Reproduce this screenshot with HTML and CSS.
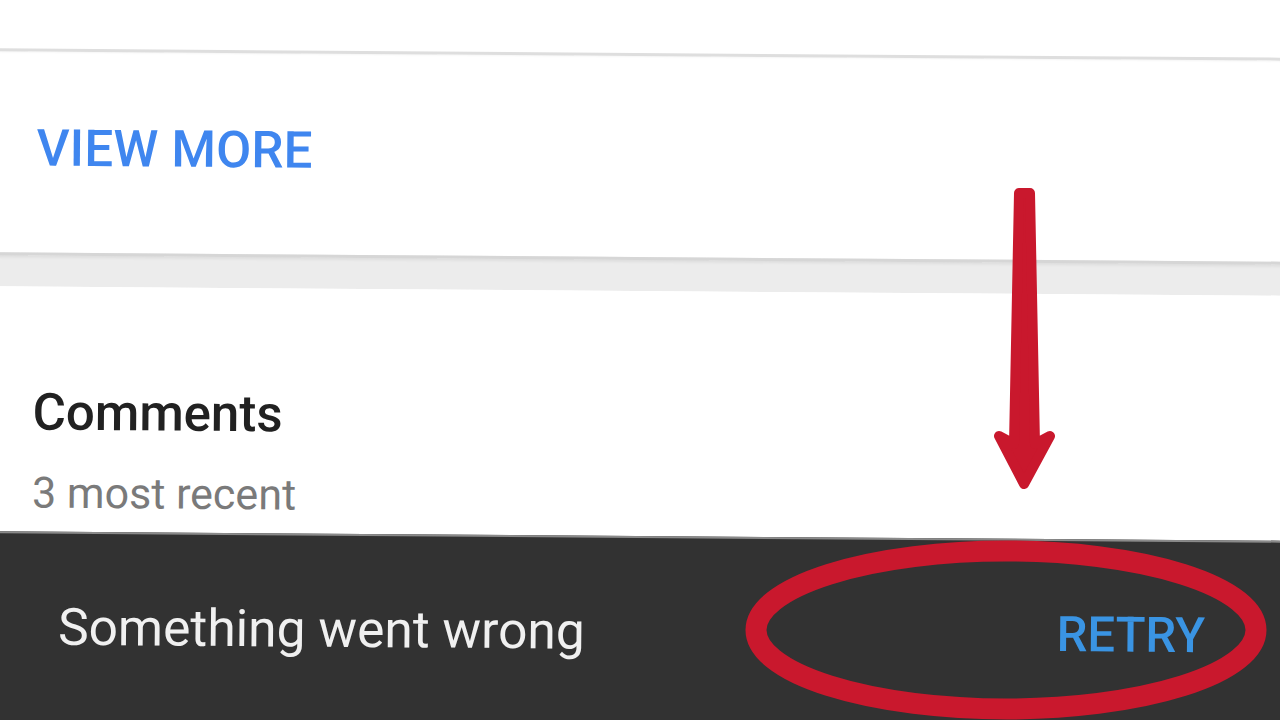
FILE: index.html
```html
<!DOCTYPE html>
<html lang="en">
<head>
<meta charset="utf-8">
<title>Comments - Something went wrong</title>
<link rel="stylesheet" href="styles.css">
</head>
<body>
<div class="page">
  <div class="top-space"></div>
  <section class="card card-more">
    <a class="view-more">VIEW MORE</a>
  </section>
  <div class="band"></div>
  <section class="card card-comments">
    <h2 class="comments-title">Comments</h2>
    <p class="comments-sub">3 most recent</p>
  </section>
  <div class="snackbar">
    <span class="snack-text">Something went wrong</span>
    <span class="snack-action">RETRY</span>
  </div>
</div>
<svg class="annotation" width="1280" height="720" viewBox="0 0 1280 720" aria-hidden="true">
  <ellipse cx="1006" cy="630" rx="250" ry="79" fill="none" stroke="#c9182d" stroke-width="21"/>
  <polygon points="1019,193 1030,193 1035,444 1050,436 1024,484 999,436 1014,444" fill="#c9182d" stroke="#c9182d" stroke-width="10" stroke-linejoin="round"/>
</svg>
</body>
</html>
```

FILE: styles.css
```css
html, body {
  margin: 0;
  padding: 0;
  width: 1280px;
  height: 720px;
  overflow: hidden;
  background: #ffffff;
  font-family: Roboto, "Liberation Sans", Arial, sans-serif;
}

.page {
  width: 1360px;
  height: 760px;
  margin-left: -40px;
  transform: rotate(0.42deg);
  transform-origin: 680px 360px;
  display: flex;
  flex-direction: column;
  background: #ffffff;
}

.top-space {
  height: 53px;
  flex: none;
  background: #ffffff;
}

.card {
  background: #ffffff;
  flex: none;
}

.card-more {
  height: 204px;
  border-top: 3px solid #dedede;
  box-sizing: border-box;
  box-shadow: inset 0 1px 2px rgba(0,0,0,0.04);
  padding: 67px 0 0 75px;
}

.view-more {
  display: block;
  font-size: 51px;
  line-height: 60px;
  font-weight: 500;
  color: #3f86ef;
  letter-spacing: 0.2px;
}

.band {
  height: 34px;
  flex: none;
  background: #ececec;
  border-top: 3px solid #d6d6d6;
  box-sizing: border-box;
  box-shadow: inset 0 2px 3px rgba(0,0,0,0.06);
}

.card-comments {
  height: 245px;
  box-sizing: border-box;
  padding: 96px 0 0 73px;
}

.comments-title {
  margin: 0;
  font-size: 51px;
  line-height: 60px;
  font-weight: 500;
  color: #212121;
}

.comments-sub {
  margin: 25px 0 0;
  font-size: 43px;
  line-height: 50px;
  font-weight: 400;
  color: #7a7a7a;
}

.snackbar {
  flex: 1;
  background: #323232;
  border-top: 2px solid #8a8a8a;
  display: flex;
  align-items: flex-start;
  justify-content: space-between;
  padding: 64px 113px 0 100px;
}

.snack-text {
  font-size: 51.5px;
  line-height: 60px;
  font-weight: 400;
  color: #f0f0f0;
}

.snack-action {
  font-size: 49px;
  line-height: 60px;
  font-weight: 500;
  color: #3a94e3;
}

.annotation {
  position: absolute;
  top: 0;
  left: 0;
}
```
